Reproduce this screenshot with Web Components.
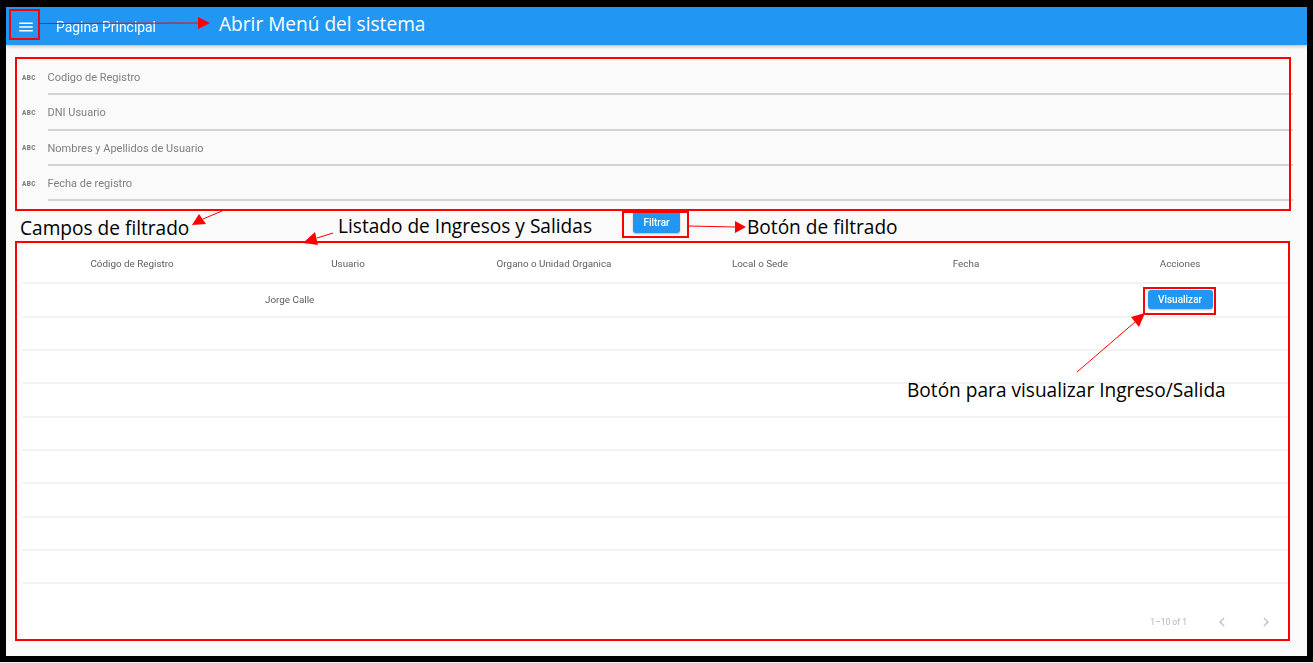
<!DOCTYPE html>
<html lang="es">
<head>
<meta charset="utf-8">
<title>Pagina Principal</title>
<style>
  html, body { margin: 0; padding: 0; background: #000; }
  body { font-family: Roboto, "Liberation Sans", sans-serif; }
</style>
</head>
<body>
<app-frame>
  <app-toolbar title="Pagina Principal"></app-toolbar>
  <filter-panel>
    <filter-field label="Codigo de Registro"></filter-field>
    <filter-field label="DNI Usuario"></filter-field>
    <filter-field label="Nombres y Apellidos de Usuario"></filter-field>
    <filter-field label="Fecha de registro"></filter-field>
  </filter-panel>
  <action-bar><blue-button>Filtrar</blue-button></action-bar>
  <data-table>
    <table-row header>
      <span>Código de Registro</span><span>Usuario</span><span>Organo o Unidad Organica</span><span>Local o Sede</span><span>Fecha</span><span>Acciones</span>
    </table-row>
    <table-row>
      <span></span><span class="left">Jorge Calle</span><span></span><span></span><span></span><span><blue-button small>Visualizar</blue-button></span>
    </table-row>
    <table-row></table-row>
    <table-row></table-row>
    <table-row></table-row>
    <table-row></table-row>
    <table-row></table-row>
    <table-row></table-row>
    <table-row></table-row>
    <table-row></table-row>
  </data-table>
  <note-layer slot="notes"></note-layer>
</app-frame>

<script>
class AppFrame extends HTMLElement {
  constructor () {
    super();
    this.attachShadow({ mode: 'open' }).innerHTML = `
      <style>
        :host { display: block; position: relative; width: 1313px; height: 663px; overflow: hidden; background: #eee; }
        .black { box-sizing: border-box; height: 662px; padding: 7px 6px 6px; background: #000; }
        .page { display: flex; flex-direction: column; height: 649px; background: #fafafa; filter: blur(.35px); }
      </style>
      <div class="black"><div class="page"><slot></slot></div></div>
      <slot name="notes"></slot>
    `;
  }
}

class AppToolbar extends HTMLElement {
  constructor () {
    super();
    this.attachShadow({ mode: 'open' }).innerHTML = `
      <style>
        :host { display: flex; flex: none; align-items: center; height: 38px; background: #2196f3; color: #fff; box-shadow: 0 1px 4px rgba(0,0,0,.3); }
        svg { display: block; width: 18px; height: 18px; margin: 1px 0 0 11px; fill: #fff; }
        .title { margin: 1px 0 0 21px; font-size: 13.9px; white-space: nowrap; }
      </style>
      <svg viewBox="0 0 24 24"><path d="M3 18h18v-2H3v2zm0-5h18v-2H3v2zm0-7v2h18V6H3z"/></svg>
      <span class="title"></span>
    `;
    this.shadowRoot.querySelector('.title').textContent = this.getAttribute('title');
  }
}

class FilterPanel extends HTMLElement {
  constructor () {
    super();
    this.attachShadow({ mode: 'open' }).innerHTML = `
      <style>
        :host { display: block; flex: none; padding: 15px 14px 0 16px; }
      </style>
      <slot></slot>
    `;
  }
}

class FilterField extends HTMLElement {
  constructor () {
    super();
    this.attachShadow({ mode: 'open' }).innerHTML = `
      <style>
        :host { display: flex; align-items: center; height: 35.33px; }
        .abc { flex: none; width: 25.5px; color: #808080; font-size: 6.4px; font-weight: 900; letter-spacing: .35px; }
        .line { flex: 1; box-sizing: border-box; height: 100%; display: flex; align-items: center; padding-top: 2px; border-bottom: 2px solid #d4d4d4; color: #808080; font-size: 11px; }
      </style>
      <span class="abc">ABC</span>
      <div class="line"></div>
    `;
    this.shadowRoot.querySelector('.line').textContent = this.getAttribute('label');
  }
}

class ActionBar extends HTMLElement {
  constructor () {
    super();
    this.attachShadow({ mode: 'open' }).innerHTML = `
      <style>
        :host { display: flex; flex: none; justify-content: center; margin-top: 10px; }
      </style>
      <slot></slot>
    `;
  }
}

class BlueButton extends HTMLElement {
  constructor () {
    super();
    this.attachShadow({ mode: 'open' }).innerHTML = `
      <style>
        :host { display: inline-flex; align-items: center; justify-content: center; box-sizing: border-box; width: 47px; height: 22px; border-radius: 3px; background: #2196f3; color: #fff; font-size: 10px; font-weight: 500; box-shadow: 0 1px 2px rgba(0,0,0,.25); }
        :host([small]) { width: 65px; height: 19px; }
      </style>
      <slot></slot>
    `;
  }
}

class DataTable extends HTMLElement {
  constructor () {
    super();
    this.attachShadow({ mode: 'open' }).innerHTML = `
      <style>
        :host { display: flex; flex-direction: column; flex: none; height: 395px; margin: 11px 17px 0; border-radius: 4px; background: #fff; color: #5c5c5c; font-size: 9.85px; }
        .foot { position: relative; flex: 1; display: flex; align-items: flex-end; justify-content: flex-end; padding: 0 15px 10px 0; color: #b5b5b5; font-size: 8.5px; }
        .range { margin-right: 26px; line-height: 14px; }
        svg { display: block; width: 18px; height: 18px; margin-bottom: -2px; margin-left: 26px; fill: #c4c4c4; }
        svg.first { margin-left: 0; }
      </style>
      <slot></slot>
      <div class="foot">
        <span class="range">1–10 of 1</span>
        <svg class="first" viewBox="0 0 24 24"><path d="M15.41 7.41 14 6l-6 6 6 6 1.41-1.41L10.83 12z"/></svg>
        <svg viewBox="0 0 24 24"><path d="M10 6 8.59 7.41 13.17 12l-4.58 4.59L10 18l6-6z"/></svg>
      </div>
    `;
  }
}

class TableRow extends HTMLElement {
  constructor () {
    super();
    this.attachShadow({ mode: 'open' }).innerHTML = `
      <style>
        :host { display: grid; grid-template-columns: 222px repeat(4, 206px) 1fr; align-items: center; flex: none; box-sizing: border-box; height: 33.33px; border-bottom: 2px solid #f2f2f2; text-align: center; }
        :host([header]) { height: 40px; padding-top: 1px; }
        ::slotted(:first-child) { padding-right: 4px; }
        ::slotted(:last-child) { padding-left: 1px; }
        ::slotted(.left) { padding-left: 20px; text-align: left; }
      </style>
      <slot></slot>
    `;
  }
}

class NoteLayer extends HTMLElement {
  constructor () {
    super();
    const notes = [
      ['Abrir Menú del sistema', 219, 24, '#fff'],
      ['Campos de filtrado', 20, 228, '#000'],
      ['Listado de Ingresos y Salidas', 338, 226, '#000'],
      ['Botón de filtrado', 747, 227, '#000'],
      ['Botón para visualizar Ingreso/Salida', 907, 390, '#000']
    ];
    const boxes = [
      [10, 10, 29, 29], [16, 58, 1274, 152], [623, 212, 65, 25],
      [16, 242, 1273, 398], [1144, 288, 71, 26]
    ];
    const arrows = [
      ['40,23.5 198,23', '198,17 210,23 198,29'],
      ['222,211 203,219', '199,214 192,225 206,224'],
      ['333,233 317,238', '315,232 303,243 318,245'],
      ['688,226 735,227', '735,221 746,227 735,233'],
      ['1077,372 1135,322', '1131,317 1145,313 1139,327']
    ];
    this.attachShadow({ mode: 'open' }).innerHTML = `
      <style>
        :host { position: absolute; inset: 0; display: block; pointer-events: none; }
        svg { position: absolute; inset: 0; width: 100%; height: 100%; }
        span { position: absolute; transform: translateY(-50%); font-family: "Open Sans", "Noto Sans", sans-serif; font-size: 19.1px; line-height: 24px; white-space: nowrap; }
      </style>
      <svg viewBox="0 0 1313 663">
        ${boxes.map(b => `<rect x="${b[0]}" y="${b[1]}" width="${b[2]}" height="${b[3]}" fill="none" stroke="#f00" stroke-width="2"/>`).join('')}
        ${arrows.map(a => `<polyline points="${a[0]}" fill="none" stroke="#f00" stroke-width="1"/><polygon points="${a[1]}" fill="#f00"/>`).join('')}
      </svg>
      ${notes.map(n => `<span style="left:${n[1]}px;top:${n[2]}px;color:${n[3]}">${n[0]}</span>`).join('')}
    `;
  }
}

customElements.define('app-frame', AppFrame);
customElements.define('app-toolbar', AppToolbar);
customElements.define('filter-panel', FilterPanel);
customElements.define('filter-field', FilterField);
customElements.define('action-bar', ActionBar);
customElements.define('blue-button', BlueButton);
customElements.define('data-table', DataTable);
customElements.define('table-row', TableRow);
customElements.define('note-layer', NoteLayer);
</script>
</body>
</html>
